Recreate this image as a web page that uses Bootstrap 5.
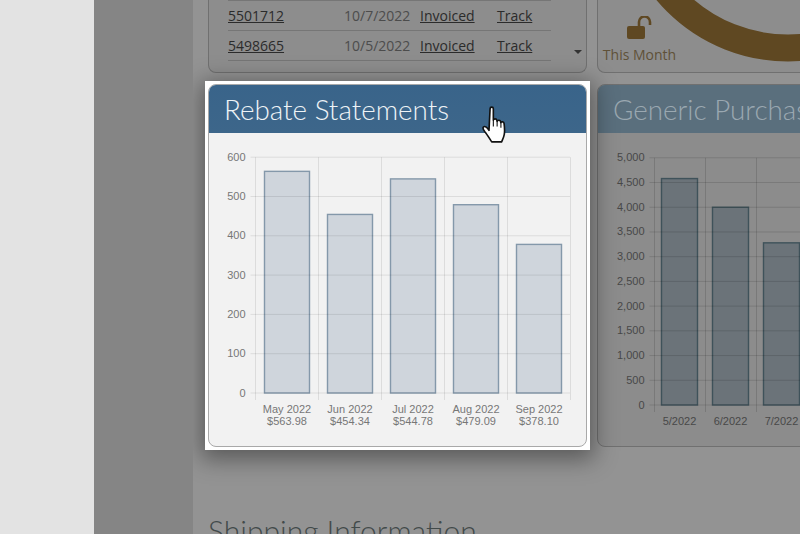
<!DOCTYPE html>
<html lang="en">
<head>
    <meta charset="UTF-8">
    <meta name="viewport" content="width=device-width, initial-scale=1.0">
    <title>Dashboard</title>
    <link href="https://cdn.jsdelivr.net/npm/bootstrap@5.3.0/dist/css/bootstrap.min.css" rel="stylesheet">
    <style>
        html, body { height: 534px; overflow: hidden; }
        body { background: #e3e3e3; font-family: "Open Sans", sans-serif; }
        .gutter-left { width: 94px; }
        .side-rail { width: 99px; background: #858585; }
        .main-area { background: #939393; padding-left: 15px; overflow: hidden; }
        .panel-gap { gap: 10px; }
        .panel { width: 379px; flex: none; border: 1px solid #707070; border-radius: 8px; background: #8d8d8d; }
        .top-row { height: 73px; }
        .top-row .panel { border-top: 0; border-radius: 0 0 8px 8px; }
        .orders { width: 323px; margin: 0 0 0 19px; color: #333; font-size: 14px; table-layout: fixed; }
        .orders td { height: 30px; padding: 0; background: transparent; color: inherit; border-color: #767676; border-top: 1px solid #767676; vertical-align: middle; }
        .orders tr:last-child td { border-bottom: 1px solid #767676; }
        .orders a { color: #2b2b2b; }
        .orders .order-col { width: 116px; }
        .orders .date-col { width: 76px; color: #4c4c4c; }
        .orders .status-col { width: 77px; }
        .scroll-arrow { position: absolute; left: 365px; top: 50px; border: 4px solid transparent; border-top: 4px solid #333; border-bottom: 0; }
        .month-panel { overflow: hidden; color: #5f5138; font-size: 14px; font-weight: 500; }
        .month-box { width: 73px; margin-left: 5px; height: 65px; }
        .ring { position: absolute; left: -1px; top: 0; }
        .charts-row { margin-top: 11px; height: 363px; }
        .panel-head { height: 48px; padding-left: 15px; font-family: Lato, sans-serif; font-weight: 300; font-size: 27.8px; line-height: 49px; white-space: nowrap; border-radius: 7px 7px 0 0; }
        .spot-frame { position: relative; z-index: 2; flex: none; padding: 3px; margin: -3px; background: #fff; box-shadow: 0 5px 22px 4px rgba(0,0,0,.4); height: 369px; }
        .spot { height: 363px; background: #f2f2f2; border-color: #a9a9a9; }
        .spot .panel-head { background: linear-gradient(#39648a, #3d668a); color: #eef3f6; }
        .dim { background: #8c8c8c; }
        .dim .panel-head { background: #5a6f7d; color: #9aa8b1; }
        .chart-svg { display: block; font-family: "Liberation Sans", sans-serif; font-size: 11px; }
        .section-title { margin: 65px 0 0; font-family: Lato, sans-serif; font-weight: 300; font-size: 30px; color: #424a4a; white-space: nowrap; }
        .hand { position: absolute; left: 481px; top: 106px; z-index: 3; }
    </style>
</head>
<body class="d-flex">
    <div class="gutter-left flex-shrink-0"></div>
    <div class="side-rail flex-shrink-0"></div>
    <div class="main-area flex-grow-1">
        <div class="top-row d-flex panel-gap">
            <div class="panel position-relative">
                <table class="table orders">
                    <tbody>
                        <tr><td class="order-col"><a href="#">5501712</a></td><td class="date-col">10/7/2022</td><td class="status-col"><a href="#">Invoiced</a></td><td><a href="#">Track</a></td></tr>
                        <tr><td class="order-col"><a href="#">5498665</a></td><td class="date-col">10/5/2022</td><td class="status-col"><a href="#">Invoiced</a></td><td><a href="#">Track</a></td></tr>
                    </tbody>
                </table>
                <span class="scroll-arrow"></span>
            </div>
            <div class="panel month-panel position-relative">
                <svg class="ring" width="379" height="73" aria-hidden="true"><circle cx="191" cy="-110" r="158" fill="none" stroke="#5f4822" stroke-width="27"/></svg>
                <div class="month-box d-flex flex-column align-items-center position-relative">
                    <svg class="mt-auto" width="27" height="24" viewBox="0 0 27 24" style="margin-bottom:4px" aria-hidden="true">
                        <rect x="1" y="10" width="18" height="13" rx="2" fill="#5f4822"/>
                        <path d="M13 10V6a5.5 5.5 0 0 1 11 0v3" fill="none" stroke="#5f4822" stroke-width="2.6"/>
                    </svg>
                    <span class="text-nowrap">This Month</span>
                </div>
            </div>
        </div>
        <div class="charts-row d-flex panel-gap">
            <div class="spot-frame">
                <div class="panel spot">
                    <div class="panel-head">Rebate Statements</div>
                    <svg id="rebateChart" class="chart-svg" width="377" height="313" viewBox="209 133 377 313"></svg>
                </div>
            </div>
            <div class="panel dim">
                <div class="panel-head">Generic Purchases</div>
                <svg id="genericChart" class="chart-svg" width="377" height="313" viewBox="598 133 377 313"></svg>
            </div>
        </div>
        <h2 class="section-title">Shipping Information</h2>
    </div>

    <svg class="hand" width="29" height="39" viewBox="0 0 26 36" aria-hidden="true">
        <path d="M8 2.5c0-2 3-2 3 0V13c.3-1.500 3-1.500 3.200 0l.3 1.200c.3-1.500 3-1.500 3.200.2l.2 1c.5-1.300 2.800-1 3 .7 .5 4 .6 8 .2 10-.5 3-1.500 4.500-2.500 7H9.500C8 31 5.500 26.500 3 23.500c-1.500-2-2-3.500-1-4.300 1.300-1 3.500.7 5 3.300z" fill="#fff" stroke="#111" stroke-width="1.500" stroke-linejoin="round"/>
        <path d="M11 13v6M14.500 14v5M18 15.500V20" stroke="#111" stroke-width="1" fill="none"/>
    </svg>

    <script src="https://cdn.jsdelivr.net/npm/bootstrap@5.3.0/dist/js/bootstrap.bundle.min.js"></script>
    <script>
        // draws a bar chart in page coordinates so the numbers line up with the screenshot
        function drawChart(id, opt) {
            let out = '';
            const yAt = v => opt.y0 - v * opt.scale;
            opt.bars.forEach((b, i) => {
                const x = opt.barX + i * opt.step;
                out += `<rect x="${x}" y="${yAt(b.v)}" width="${opt.barW}" height="${opt.y0 - yAt(b.v)}" fill="${opt.fill}" stroke="${opt.stroke}" stroke-width="1.4"/>`;
            });
            for (let v = 0; v <= opt.max; v += opt.tick) {
                out += `<line x1="${opt.gridX - 5}" x2="${opt.gridEnd}" y1="${yAt(v)}" y2="${yAt(v)}" stroke="${opt.grid}"/>`;
                out += `<text x="${opt.gridX - 10}" y="${yAt(v) + 3.5}" text-anchor="end" fill="${opt.text}">${v.toLocaleString('en-US')}</text>`;
            }
            for (let i = 0; i <= opt.bars.length; i++) {
                const x = opt.gridX + i * opt.step;
                out += `<line x1="${x}" x2="${x}" y1="${yAt(opt.max)}" y2="${opt.y0 + 7}" stroke="${opt.grid}"/>`;
            }
            opt.bars.forEach((b, i) => {
                const cx = opt.barX + opt.barW / 2 + i * opt.step;
                b.labels.forEach((t, j) => {
                    out += `<text x="${cx}" y="${opt.labelY + j * 12}" text-anchor="middle" fill="${opt.text}">${t}</text>`;
                });
            });
            document.getElementById(id).innerHTML = out;
        }

        drawChart('rebateChart', {
            y0: 393, scale: 0.393, max: 600, tick: 100,
            gridX: 255.5, gridEnd: 570, step: 63, barX: 264.5, barW: 45,
            fill: '#cfd5dc', stroke: '#8498aa', grid: 'rgba(0,0,0,.09)', text: '#777', labelY: 413,
            bars: [
                { v: 563.98, labels: ['May 2022', '$563.98'] },
                { v: 454.34, labels: ['Jun 2022', '$454.34'] },
                { v: 544.78, labels: ['Jul 2022', '$544.78'] },
                { v: 479.09, labels: ['Aug 2022', '$479.09'] },
                { v: 378.10, labels: ['Sep 2022', '$378.10'] }
            ]
        });

        drawChart('genericChart', {
            y0: 405, scale: 0.04944, max: 5000, tick: 500,
            gridX: 654.5, gridEnd: 830, step: 51, barX: 661.5, barW: 36,
            fill: '#6b7379', stroke: '#3f525a', grid: 'rgba(0,0,0,.13)', text: '#484848', labelY: 425,
            bars: [
                { v: 4580, labels: ['5/2022'] },
                { v: 4000, labels: ['6/2022'] },
                { v: 3280, labels: ['7/2022'] },
                { v: 3000, labels: ['8/2022'] }
            ]
        });
    </script>
</body>
</html>
